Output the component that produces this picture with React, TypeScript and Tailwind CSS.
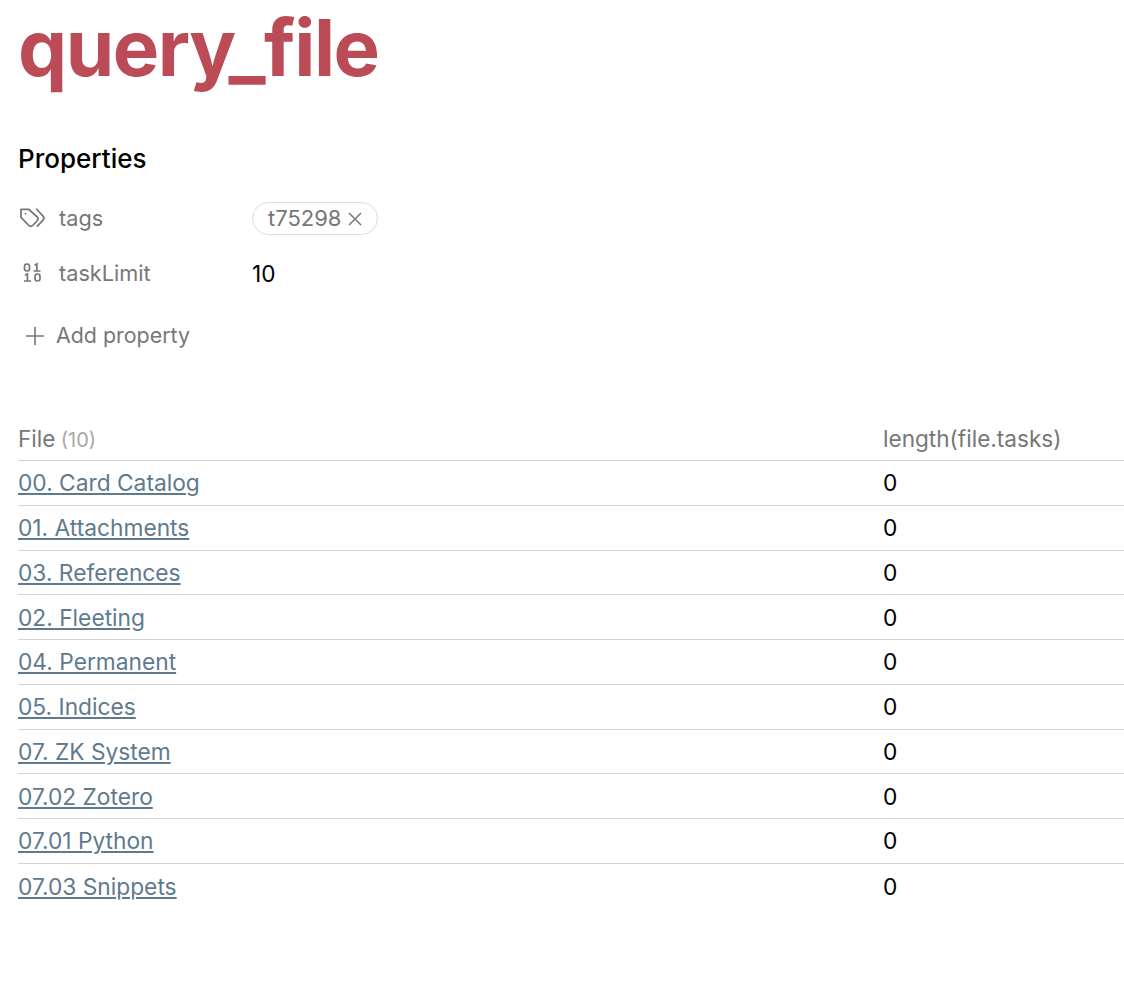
import React from "react";
const rows = ["00. Card Catalog","01. Attachments","03. References","02. Fleeting","04. Permanent","05. Indices","07. ZK System","07.02 Zotero","07.01 Python","07.03 Snippets"];
export default function App() {
  return (
    <div className="w-[1124px] h-[1000px] bg-white overflow-hidden pl-[18px] font-['Inter',sans-serif]">
      <h1 className="text-[78px] leading-[72px] font-[650] text-[#bc4b58] tracking-[-1.5px] pt-[12px] h-[88px]">query_file</h1>
      <h2 className="mt-[56px] text-[26px] leading-[30px] font-medium text-black">Properties</h2>
      <div className="mt-[17px] flex flex-col">
        <div className="flex items-center h-[55px]">
          <div className="w-[234px] flex items-center gap-[11px] text-[21.7px] text-[#777777]">
            <svg width="30" height="30" viewBox="0 0 24 24" fill="none" stroke="#777777" strokeWidth="1.4" strokeLinecap="round" strokeLinejoin="round" className="shrink-0 mr-[0px]"><path d="M8.5 5H2.4v6.5l6.1 6.3c.94.94 2.48.94 3.42 0l3.3-3.4c.94-.94.94-2.48 0-3.42L8.5 5Z"/><path d="M6 8.6v-.1"/><path d="m15 5 5 5.5a2.4 2.4 0 0 1 0 3.2L15.5 18.5"/></svg>
            tags
          </div>
          <div className="flex items-center h-[33px] border border-[#dcdcdc] rounded-full pl-[15px] pr-[14px] text-[22px] text-[#777777] gap-[6px]">t75298
            <svg width="16" height="16" viewBox="0 0 16 16" stroke="#777777" strokeWidth="1.5"><path d="M2 2l12 12M14 2L2 14"/></svg>
          </div>
        </div>
        <div className="flex items-center h-[55px]">
          <div className="w-[234px] flex items-center gap-[11px] text-[21.7px] text-[#777777]">
            <svg width="30" height="24" viewBox="0 0 30 24" fill="none" stroke="#777777" strokeWidth="1.7" className="shrink-0"><rect x="6.5" y="3" width="5" height="7" rx="2.4"/><path d="M16.5 4.2l2.4-1.2v7M15.5 10h7"/><path d="M7 14.2l2.4-1.2v7M6 20h7"/><rect x="17" y="13" width="5" height="7" rx="2.4"/></svg>
            taskLimit
          </div>
          <div className="text-[22.6px] text-black">10</div>
        </div>
      </div>
      <div className="mt-[7px] flex items-center gap-[10px] text-[21.4px] text-[#777777] h-[55px] pl-[6px]">
        <svg width="22" height="22" viewBox="0 0 22 22" stroke="#777777" strokeWidth="1.6"><path d="M11 2v18M2 11h18"/></svg>
        Add property
      </div>
      <div className="mt-[54px]">
        <div className="flex items-center h-[44px] border-b border-[#d4d4d4] text-[22.6px] text-[#777777]">
          <div className="w-[865px]">File <span className="text-[20px] text-[#a8a8a8] -ml-[1px]">(10)</span></div>
          <div>length(file.tasks)</div>
        </div>
        {rows.map((r) => (
          <div key={r} className="flex items-center h-[44.75px] pt-[1px] border-b border-[#d4d4d4] last:border-b-0 text-[22.75px]">
            <div className="w-[865px] text-[#5f7a8e] underline underline-offset-2">{r}</div>
            <div className="text-black">0</div>
          </div>
        ))}
      </div>
    </div>
  );
}
